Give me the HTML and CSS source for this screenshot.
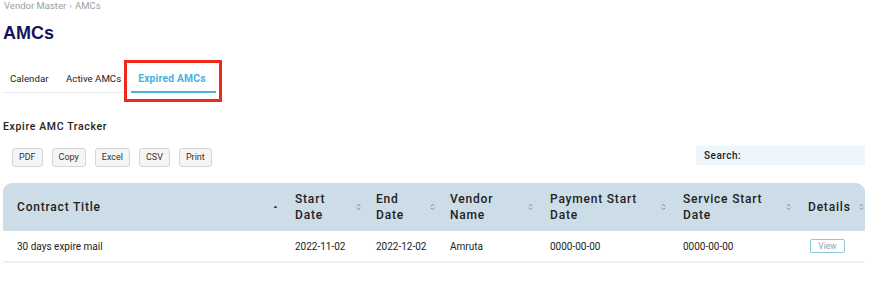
FILE: index.html
```html
<!DOCTYPE html>
<html>
<head>
<meta charset="utf-8">
<link rel="stylesheet" href="styles.css">
</head>
<body>
<div class="page">
  <div class="breadcrumb"><span>Vendor Master</span><span class="sep">›</span><span>AMCs</span></div>
  <h1 class="title">AMCs</h1>
  <div class="tabs">
    <div class="tab tab-cal">Calendar</div>
    <div class="tab tab-active">Active AMCs</div>
    <div class="tab tab-expired is-current">Expired AMCs<span class="highlight"></span></div>
  </div>
  <div class="section-title">Expire AMC Tracker</div>
  <div class="toolbar">
    <div class="buttons">
      <button class="btn">PDF</button>
      <button class="btn">Copy</button>
      <button class="btn">Excel</button>
      <button class="btn">CSV</button>
      <button class="btn">Print</button>
    </div>
    <label class="search">Search:</label>
  </div>
  <table class="grid">
    <colgroup>
      <col class="c1"><col class="c2"><col class="c3"><col class="c4"><col class="c5"><col class="c6"><col class="c7">
    </colgroup>
    <thead>
      <tr>
        <th class="p1"><div class="th"><span>Contract Title</span><svg class="sort" width="5" height="8" viewBox="0 0 5 8"><path d="M0.5 5 L2.5 2.6 L4.5 5 Z" fill="#444"/></svg></div></th>
        <th class="p2"><div class="th"><span>Start<br>Date</span><svg class="sort" width="5" height="8" viewBox="0 0 5 8"><path d="M0.8 3.2 L2.5 1.3 L4.2 3.2 M0.8 4.8 L2.5 6.7 L4.2 4.8" fill="none" stroke="#777" stroke-width="0.8"/></svg></div></th>
        <th class="p3"><div class="th"><span>End<br>Date</span><svg class="sort" width="5" height="8" viewBox="0 0 5 8"><path d="M0.8 3.2 L2.5 1.3 L4.2 3.2 M0.8 4.8 L2.5 6.7 L4.2 4.8" fill="none" stroke="#777" stroke-width="0.8"/></svg></div></th>
        <th class="p4"><div class="th"><span>Vendor<br>Name</span><svg class="sort" width="5" height="8" viewBox="0 0 5 8"><path d="M0.8 3.2 L2.5 1.3 L4.2 3.2 M0.8 4.8 L2.5 6.7 L4.2 4.8" fill="none" stroke="#777" stroke-width="0.8"/></svg></div></th>
        <th class="p5"><div class="th"><span>Payment Start<br>Date</span><svg class="sort" width="5" height="8" viewBox="0 0 5 8"><path d="M0.8 3.2 L2.5 1.3 L4.2 3.2 M0.8 4.8 L2.5 6.7 L4.2 4.8" fill="none" stroke="#777" stroke-width="0.8"/></svg></div></th>
        <th class="p6"><div class="th"><span>Service Start<br>Date</span><svg class="sort" width="5" height="8" viewBox="0 0 5 8"><path d="M0.8 3.2 L2.5 1.3 L4.2 3.2 M0.8 4.8 L2.5 6.7 L4.2 4.8" fill="none" stroke="#777" stroke-width="0.8"/></svg></div></th>
        <th class="p7"><div class="th"><span>Details</span><svg class="sort" width="5" height="8" viewBox="0 0 5 8"><path d="M0.8 3.2 L2.5 1.3 L4.2 3.2 M0.8 4.8 L2.5 6.7 L4.2 4.8" fill="none" stroke="#777" stroke-width="0.8"/></svg></div></th>
      </tr>
    </thead>
    <tbody>
      <tr>
        <td class="p1">30 days expire mail</td>
        <td class="p2">2022-11-02</td>
        <td class="p3">2022-12-02</td>
        <td class="p4">Amruta</td>
        <td class="p5">0000-00-00</td>
        <td class="p6">0000-00-00</td>
        <td class="p7"><button class="view">View</button></td>
      </tr>
    </tbody>
  </table>
</div>
</body>
</html>
```

FILE: styles.css
```css
* { box-sizing: border-box; }
html, body { margin: 0; padding: 0; background: #ffffff; }
body { font-family: Roboto, "Liberation Sans", Arial, sans-serif; color: #222; }

.page { padding: 0 18px 0 3px; }

.breadcrumb {
  font-size: 9.5px;
  line-height: 12px;
  color: #a0a0a0;
  padding-left: 1px;
  display: flex;
  gap: 3px;
}
.breadcrumb .sep { color: #b8b8b8; }

.title {
  margin: 10px 0 0 0;
  font-family: "Liberation Sans", Arial, sans-serif;
  font-size: 18px;
  line-height: 22px;
  font-weight: bold;
  color: #14145c;
}

.tabs {
  display: flex;
  align-items: flex-end;
  margin-top: 19px;
  height: 30px;
}
.tab {
  font-size: 9.7px;
  line-height: 12px;
  color: #222;
  padding: 8px 8px 7px 7px;
  border-bottom: 1px solid #e6e6e6;
  position: relative;
}
.tab-cal { width: 55px; }
.tab-active { padding-left: 8px; padding-right: 2px; margin-right: 8px; }
.tab.is-current {
  color: #45b3dd;
  font-weight: 700;
  font-size: 10.3px;
  letter-spacing: 0.2px;
  padding: 8px 6px 6px 7px;
  border-bottom: 2px solid #45b3dd;
  width: 85px;
}
.highlight {
  position: absolute;
  left: -7px;
  right: -6px;
  top: -5px;
  bottom: -11px;
  border: 3px solid #ee2a1b;
}

.section-title {
  margin-top: 27px;
  font-size: 10.5px;
  line-height: 14px;
  font-weight: 500;
  letter-spacing: 0.65px;
  color: #222;
}

.toolbar {
  display: flex;
  justify-content: space-between;
  align-items: flex-start;
  margin-top: 12px;
}
.buttons {
  display: flex;
  gap: 9px;
  padding-left: 9px;
  padding-top: 2px;
}
.btn {
  font-family: Roboto, "Liberation Sans", Arial, sans-serif;
  font-size: 9px;
  line-height: 17px;
  height: 19px;
  padding: 0 6px;
  color: #333;
  background: #f5f5f5;
  border: 1px solid #d6d6d6;
  border-radius: 3px;
}
.search {
  width: 169px;
  height: 19px;
  background: #eef6fd;
  font-size: 10px;
  line-height: 19px;
  font-weight: 500;
  letter-spacing: 0.5px;
  color: #222;
  padding-left: 8px;
}

.grid {
  margin-top: 16px;
  width: 862px;
  border-collapse: separate;
  border-spacing: 0;
  table-layout: fixed;
}
.c1 { width: 280px; }
.c2 { width: 82px; }
.c3 { width: 75px; }
.c4 { width: 99px; }
.c5 { width: 133px; }
.c6 { width: 125px; }
.c7 { width: 68px; }

.grid th {
  background: #cddde7;
  height: 48px;
  padding: 0 5px 0 11px;
  text-align: left;
  font-size: 12px;
  line-height: 16px;
  font-weight: 500;
  letter-spacing: 0.8px;
  color: #222;
}
.grid th:first-child { border-top-left-radius: 9px; }
.grid th:last-child { border-top-right-radius: 9px; }
.th {
  display: flex;
  justify-content: space-between;
  align-items: center;
}
.sort { flex: none; }

.grid td {
  height: 32px;
  padding: 0 5px 0 11px;
  font-size: 10px;
  color: #222;
  border-bottom: 2px solid #eef0f2;
  white-space: nowrap;
}
.grid .p1 { padding-left: 14px; padding-right: 5px; }
.grid .p2 { padding-left: 12px; padding-right: 4px; }
.grid .p3 { padding-left: 11px; padding-right: 5px; }
.grid .p4 { padding-left: 10px; padding-right: 6px; }
.grid .p5 { padding-left: 11px; padding-right: 6px; }
.grid .p6 { padding-left: 11px; padding-right: 6px; }
.grid .p7 { padding-left: 11px; padding-right: 1px; }

.view {
  font-family: Roboto, "Liberation Sans", Arial, sans-serif;
  font-size: 8.5px;
  line-height: 12px;
  height: 14px;
  width: 35px;
  padding: 0;
  margin-left: 2px;
  color: #7fa9bd;
  background: #fff;
  border: 1px solid #8cc8df;
  border-radius: 2px;
}
```
